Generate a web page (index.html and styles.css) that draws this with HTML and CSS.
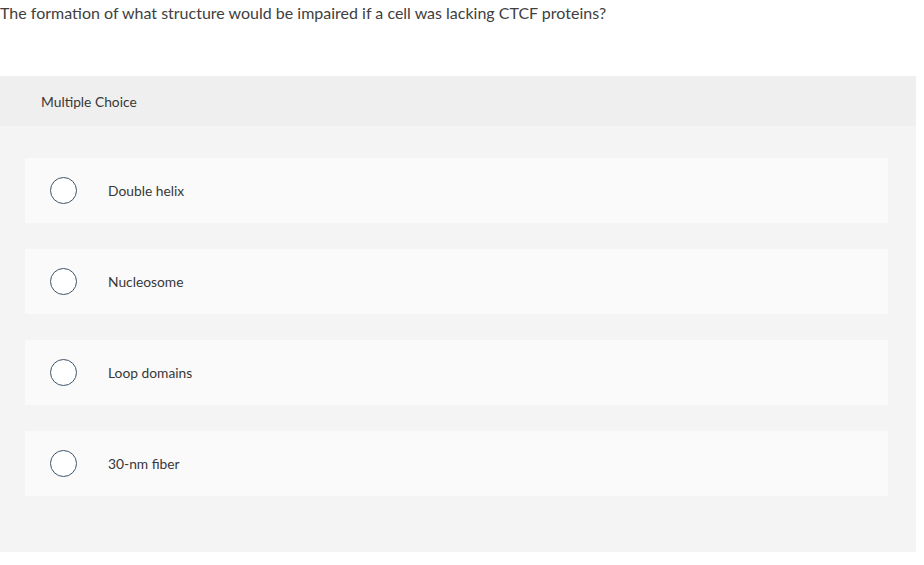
FILE: index.html
```html
<!DOCTYPE html>
<html>
<head>
<meta charset="utf-8">
<link rel="stylesheet" href="styles.css">
</head>
<body>
<div class="question">The formation of what structure would be impaired if a cell was lacking CTCF proteins?</div>
<div class="panel">
  <div class="panel-head">Multiple Choice</div>
  <div class="options">
    <div class="option"><span class="radio"></span><span class="label">Double helix</span></div>
    <div class="option"><span class="radio"></span><span class="label">Nucleosome</span></div>
    <div class="option"><span class="radio"></span><span class="label">Loop domains</span></div>
    <div class="option"><span class="radio"></span><span class="label">30-nm fiber</span></div>
  </div>
</div>
</body>
</html>
```
FILE: styles.css
```css
html, body {
  margin: 0;
  padding: 0;
  background: #ffffff;
}
body {
  font-family: Lato, "Open Sans", "Liberation Sans", sans-serif;
  color: #333333;
}
.question {
  height: 76px;
  box-sizing: border-box;
  padding-top: 3px;
  font-size: 16px;
  line-height: 20px;
  color: #404040;
}
.panel {
  width: 916px;
  background: #f4f4f4;
}
.panel-head {
  height: 50px;
  background: #efefef;
  display: flex;
  align-items: center;
  padding-left: 41px;
  font-size: 13.8px;
  color: #383838;
}
.options {
  display: flex;
  flex-direction: column;
  gap: 26px;
  padding: 32px 28px 56px 25px;
}
.option {
  height: 65px;
  background: #fafafa;
  display: flex;
  align-items: center;
  padding-left: 25px;
}
.radio {
  width: 25px;
  height: 25px;
  border: 1.5px solid #3e5468;
  border-radius: 50%;
  background: #ffffff;
  flex: none;
}
.label {
  margin-left: 31px;
  font-size: 13.8px;
  color: #383838;
}
```
